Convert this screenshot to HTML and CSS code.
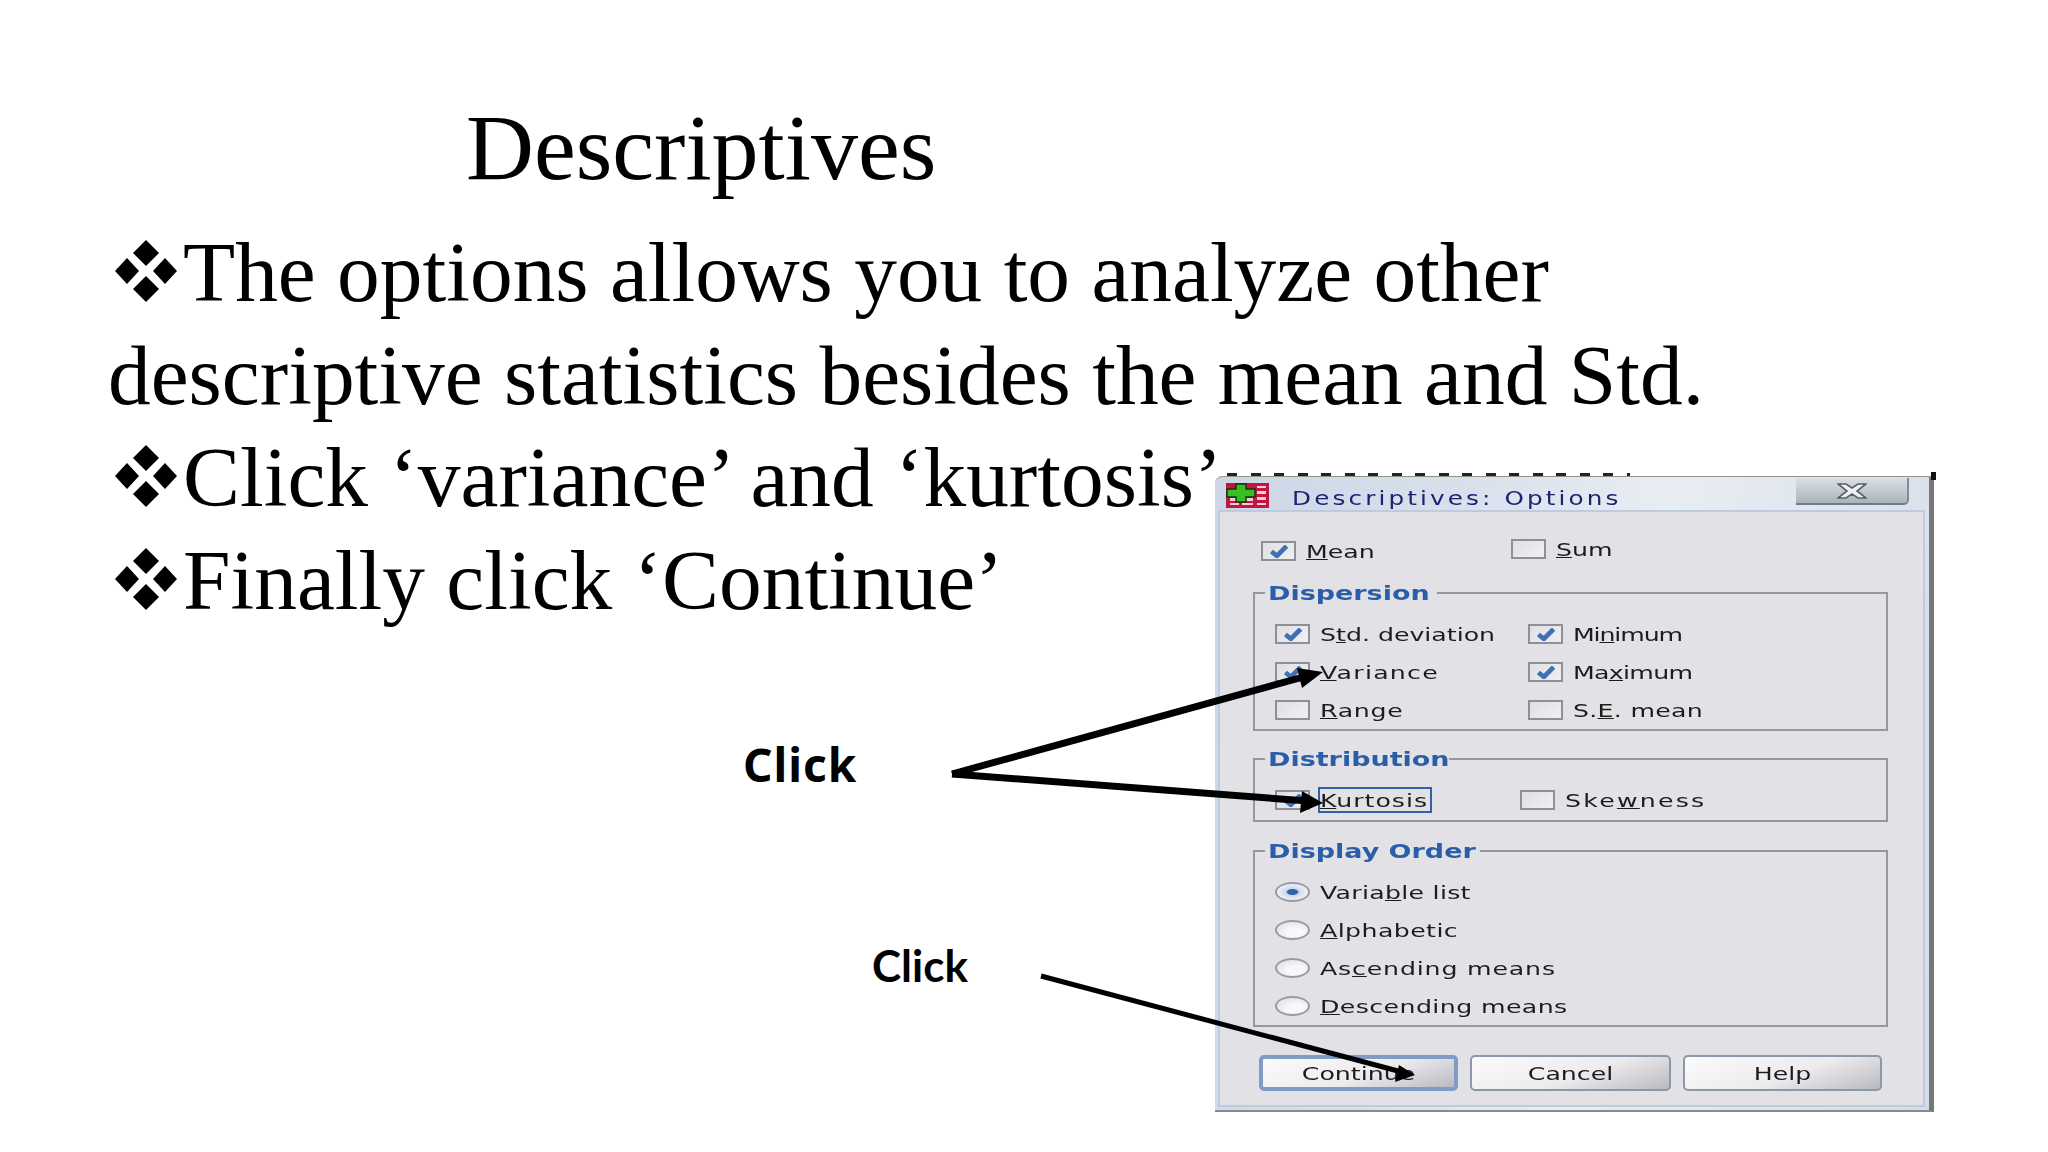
FILE: index.html
```html
<!DOCTYPE html>
<html lang="en">
<head>
<meta charset="utf-8">
<title>Descriptives</title>
<link rel="stylesheet" href="styles.css">
</head>
<body>
<main class="slide">
  <h1 class="title">Descriptives</h1>
  <p class="body-text">
    <svg class="bullet" viewBox="0 0 62 60"><polygon points="31,-1 44,12 31,25 18,12"/><polygon points="12,17 24,30 12,43 0,30"/><polygon points="50,17 62,30 50,43 38,30"/><polygon points="31,35 44,48 31,61 18,48"/></svg>The options allows you to analyze other<br>
    descriptive statistics besides the mean and Std.<br>
    <svg class="bullet" viewBox="0 0 62 60"><polygon points="31,-1 44,12 31,25 18,12"/><polygon points="12,17 24,30 12,43 0,30"/><polygon points="50,17 62,30 50,43 38,30"/><polygon points="31,35 44,48 31,61 18,48"/></svg>Click ‘variance’ and ‘kurtosis’<br>
    <svg class="bullet" viewBox="0 0 62 60"><polygon points="31,-1 44,12 31,25 18,12"/><polygon points="12,17 24,30 12,43 0,30"/><polygon points="50,17 62,30 50,43 38,30"/><polygon points="31,35 44,48 31,61 18,48"/></svg>Finally click ‘Continue’
  </p>

  <div class="sliver"></div>
  <div class="corner-dot"></div>

  <section class="win">
    <header class="titlebar">
      <svg class="app-icon" viewBox="0 0 43 25">
        <rect width="43" height="25" fill="#c5153f"/>
        <g fill="#f2ccd6">
          <rect x="31" y="3" width="9" height="2"/><rect x="31" y="8" width="9" height="3"/><rect x="31" y="14" width="9" height="3"/><rect x="31" y="20" width="9" height="2"/>
          <rect x="4" y="15" width="9" height="3"/><rect x="16" y="15" width="11" height="3"/><rect x="4" y="20" width="9" height="2"/><rect x="16" y="20" width="11" height="2"/>
        </g>
        <path d="M10 1h10v5h9v8h-9v5H10v-5H1V6h9z" fill="#37c020" stroke="#123312" stroke-width="1.4"/>
      </svg>
      <span class="t win-title">Descriptives: Options</span>
      <div class="close-btn">
        <svg class="close-x" viewBox="0 0 30 16"><path d="M1 1h8l6 4 6-4h8l-9 7 9 7h-8l-6-4-6 4H1l9-7z" fill="#eef0f2" stroke="#5a6068" stroke-width="1.6"/></svg>
      </div>
    </header>

    <div class="client">
      <div class="top-row">
        <label class="opt"><span class="box on"><svg class="tick" viewBox="0 0 16 12"><path d="M1 6l5 4 9-9" /></svg></span><span class="t"><u>M</u>ean</span></label>
        <label class="opt opt-raised"><span class="box"></span><span class="t"><u>S</u>um</span></label>
      </div>

      <fieldset class="grp grp-disp">
        <legend class="lg lg-disp"><span class="t tb">Dispersion</span></legend>
        <div class="grp-grid">
          <label class="opt"><span class="box on"><svg class="tick" viewBox="0 0 16 12"><path d="M1 6l5 4 9-9" /></svg></span><span class="t">S<u>t</u>d. deviation</span></label>
          <label class="opt"><span class="box on"><svg class="tick" viewBox="0 0 16 12"><path d="M1 6l5 4 9-9" /></svg></span><span class="t ls-n8">Mi<u>n</u>imum</span></label>
          <label class="opt"><span class="box on"><svg class="tick" viewBox="0 0 16 12"><path d="M1 6l5 4 9-9" /></svg></span><span class="t ls-9"><u>V</u>ariance</span></label>
          <label class="opt"><span class="box on"><svg class="tick" viewBox="0 0 16 12"><path d="M1 6l5 4 9-9" /></svg></span><span class="t ls-n5">Ma<u>x</u>imum</span></label>
          <label class="opt"><span class="box"></span><span class="t ls-5"><u>R</u>ange</span></label>
          <label class="opt"><span class="box"></span><span class="t ls-2">S.<u>E</u>. mean</span></label>
        </div>
      </fieldset>

      <fieldset class="grp grp-dist">
        <legend class="lg lg-dist"><span class="t tb">Distribution</span></legend>
        <div class="dist-grid">
          <label class="opt"><span class="box on"><svg class="tick" viewBox="0 0 16 12"><path d="M1 6l5 4 9-9" /></svg></span><span class="focus"><span class="t ls-7"><u>K</u>urtosis</span></span></label>
          <label class="opt"><span class="box"></span><span class="t ls-16">Ske<u>w</u>ness</span></label>
        </div>
      </fieldset>

      <fieldset class="grp grp-order">
        <legend class="lg lg-order"><span class="t tb">Display Order</span></legend>
        <div class="order-list">
          <label class="opt"><span class="radio sel"></span><span class="t ls-2">Varia<u>b</u>le list</span></label>
          <label class="opt"><span class="radio"></span><span class="t ls-3"><u>A</u>lphabetic</span></label>
          <label class="opt"><span class="radio"></span><span class="t ls-6">As<u>c</u>ending means</span></label>
          <label class="opt"><span class="radio"></span><span class="t ls-3"><u>D</u>escending means</span></label>
        </div>
      </fieldset>

      <div class="btn-row">
        <div class="btn btn-default"><span class="t tc">Continue</span></div>
        <div class="btn btn-mid"><span class="t tc">Cancel</span></div>
        <div class="btn"><span class="t tc">Help</span></div>
      </div>
    </div>
  </section>

  <span class="click click-a">Click</span>
  <span class="click click-b">Click</span>

  <svg class="arrows" viewBox="0 0 2048 1152">
    <g class="shaft"><line x1="952" y1="774" x2="1305" y2="676.5" stroke-width="7"/><line x1="952" y1="774" x2="1305" y2="800.8" stroke-width="7"/><line x1="1041" y1="976" x2="1398" y2="1071" stroke-width="5"/></g>
    <polygon points="1323,672 1302,688 1297,668"/>
    <polygon points="1323,803 1300,813 1302,791"/>
    <polygon points="1415,1075 1395,1082 1399,1065"/>
  </svg>
</main>
</body>
</html>
```

FILE: styles.css
```css
* { box-sizing: border-box; }
html, body { margin: 0; background: #fff; }

.slide {
  position: relative;
  width: 2048px;
  height: 1152px;
  overflow: hidden;
  background: #fff;
  padding-top: 97px;
  font-family: "Liberation Serif", "Times New Roman", serif;
  color: #000;
}

.title {
  margin: 0 0 24px 466px;
  font-size: 94.1px;
  line-height: 100px;
  font-weight: 400;
}

.body-text {
  margin: 0;
  padding-left: 108px;
  font-size: 85.4px;
  line-height: 102.5px;
  white-space: nowrap;
}

.bullet {
  width: 62px;
  height: 60px;
  margin: 0 6px 0 7px;
  vertical-align: baseline;
  overflow: visible;
}

/* hidden text peeking above the dialog */
.sliver {
  position: absolute;
  left: 1227px;
  top: 473px;
  width: 403px;
  height: 3px;
  background: repeating-linear-gradient(90deg, #222 0 10px, transparent 10px 23.5px);
  filter: blur(0.5px);
}
.corner-dot {
  position: absolute;
  left: 1931px;
  top: 472px;
  width: 5px;
  height: 8px;
  background: #111;
  z-index: 3;
}

/* dialog */
.win {
  position: absolute;
  left: 1215px;
  top: 476px;
  width: 719px;
  height: 636px;
  display: flex;
  flex-direction: column;
  border-top: 1px solid #8f9488;
  border-right: 5px solid #777;
  border-bottom: 2px solid #8a8a8a;
  border-top-left-radius: 8px;
  background: linear-gradient(100deg, #ccd6e6 0%, #d8e0ec 30%, #e9edf3 55%, #d5dde9 100%);
  font-family: "DejaVu Sans", sans-serif;
  font-size: 18px;
  color: #1c1c1c;
  filter: blur(0.5px);
}

.titlebar {
  flex: none;
  height: 33px;
  display: flex;
  align-items: flex-start;
  padding: 6px 0 0 11px;
}
.app-icon { width: 43px; height: 25px; flex: none; }
.t {
  display: inline-block;
  padding-top: 2px;
  white-space: nowrap;
  transform: scaleX(1.4);
  transform-origin: left center;
}
.ls-n8 { letter-spacing: -0.8px; }
.ls-n5 { letter-spacing: -0.5px; }
.ls-2 { letter-spacing: 0.2px; }
.ls-3 { letter-spacing: 0.3px; }
.ls-5 { letter-spacing: 0.5px; }
.ls-6 { letter-spacing: 0.6px; }
.ls-7 { letter-spacing: 0.7px; }
.ls-9 { letter-spacing: 0.9px; }
.ls-16 { letter-spacing: 1.6px; }
.win-title {
  margin: 1px 0 0 23px;
  font-size: 19px;
  line-height: 24px;
  letter-spacing: 2.4px;
  color: #1a2470;
  transform: scaleX(1.3);
}
.close-btn {
  width: 113px;
  height: 27px;
  margin: -5px 20px 0 auto;
  display: flex;
  align-items: center;
  justify-content: center;
  border-right: 2px solid #7e8b98;
  border-bottom: 2px solid #6f7c8a;
  border-bottom-right-radius: 5px;
  background: linear-gradient(180deg, #d8dfe5 0%, #c6cdd2 45%, #a9b3ba 100%);
}
.close-x { width: 30px; height: 16px; }

.client {
  flex: 1;
  margin: 0 4px 3px 3px;
  border: 2px solid #bccbe0;
  background: #e2e2e6;
  padding: 29px 0 0 33px;
  display: flex;
  flex-direction: column;
}

.opt {
  display: flex;
  align-items: center;
  gap: 10px;
  height: 20px;
  line-height: 20px;
}
.box {
  flex: none;
  width: 35px;
  height: 20px;
  display: flex;
  align-items: center;
  justify-content: center;
  border: 2px solid #8f8f9a;
  background: linear-gradient(135deg, #e0e0e4, #f0f0f3);
}
.tick { width: 20px; height: 13px; }
.tick path { fill: none; stroke: #3f70b4; stroke-width: 4.4; }

.top-row {
  display: grid;
  grid-template-columns: 250px 1fr;
  padding-left: 8px;
}
.opt-raised { margin-top: -2px; }

.grp {
  width: 635px;
  margin: 16px 0 0;
  padding: 0;
  min-width: 0;
  border: 2px solid #96969e;
}
.grp-disp { margin-top: 20px; }
.grp-order { margin-top: 17px; }
.lg {
  margin-left: 10px;
  padding: 0 0 0 3px;
  height: 24px;
  line-height: 24px;
  font-size: 19px;
  color: #2b5ea8;
  font-weight: 700;
}
.lg-disp { width: 172px; }
.lg-dist { width: 184px; }
.lg-order { width: 215px; }
.tb { padding-top: 0; transform: scaleX(1.42); }

.grp-grid {
  display: grid;
  grid-template-columns: 253px 1fr;
  row-gap: 18px;
  padding: 19px 0 9px 20px;
}
.dist-grid {
  display: grid;
  grid-template-columns: 245px 1fr;
  height: 49px;
  padding: 19px 0 0 20px;
}
.focus {
  flex: none;
  width: 114px;
  height: 26px;
  margin-left: -2px;
  display: flex;
  align-items: center;
  border: 2px solid #2f62ab;
}
.order-list {
  display: flex;
  flex-direction: column;
  gap: 17.9px;
  padding: 19px 0 9px 20px;
}
.radio {
  flex: none;
  width: 35px;
  height: 20px;
  border-radius: 50%;
  border: 2px solid #9a9aa2;
  background: radial-gradient(ellipse at 60% 70%, #f8f8fa 30%, #dcdce2 100%);
}
.radio.sel { background: radial-gradient(ellipse at center, #2f62ab 0 22%, #cdd8ea 30%, #f5f6f9 75%); }

.btn-row {
  display: grid;
  grid-template-columns: 199px 201px 199px;
  column-gap: 12px;
  margin: 28px 0 0 6px;
}
.btn {
  height: 36px;
  display: flex;
  align-items: center;
  justify-content: center;
  border: 2px solid #8a98a8;
  border-radius: 5px;
  background: linear-gradient(160deg, #fbfbfc 0%, #ececef 55%, #b9b9c0 100%);
}
.btn-default { border: 4px solid #7f9cc4; }
.tc { transform-origin: center; }

/* labels and pointers on the slide */
.click {
  position: absolute;
  color: #000;
  font-weight: 700;
  line-height: 1;
}
.click-a {
  left: 743px;
  top: 741px;
  font-family: "Noto Sans", sans-serif;
  font-size: 46px;
  letter-spacing: 1px;
}
.click-b {
  left: 872px;
  top: 943px;
  font-family: "Lato", sans-serif;
  font-size: 44px;
}
.arrows {
  position: absolute;
  left: 0;
  top: 0;
  width: 2048px;
  height: 1152px;
  pointer-events: none;
}
.arrows polygon { fill: #000; }
.shaft line { stroke: #000; }
```
